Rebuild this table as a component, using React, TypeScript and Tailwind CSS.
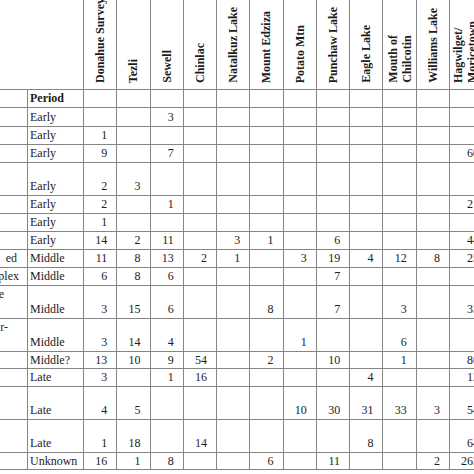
type Row = {
  lead?: string;
  leadPad?: string;
  leadTop?: boolean;
  period: string;
  h: string;
  vals: string[];
  bold?: boolean;
};

const sites: string[][] = [
  ["Donahue Survey"],
  ["Tezli"],
  ["Sewell"],
  ["Chinlac"],
  ["Natalkuz Lake"],
  ["Mount Edziza"],
  ["Potato Mtn"],
  ["Punchaw Lake"],
  ["Eagle Lake"],
  ["Mouth of", "Chilcotin"],
  ["Williams Lake"],
  ["Hagwilget/", "Moricetown"],
];

const e = "";

const rows: Row[] = [
  { period: "Period", bold: true, h: "h-[18px]", vals: [e, e, e, e, e, e, e, e, e, e, e, e] },
  { period: "Early", h: "h-[19px]", vals: [e, e, "3", e, e, e, e, e, e, e, e, e] },
  { period: "Early", h: "h-[18px]", vals: ["1", e, e, e, e, e, e, e, e, e, e, e] },
  { period: "Early", h: "h-[18px]", vals: ["9", e, "7", e, e, e, e, e, e, e, e, "60"] },
  { period: "Early", h: "h-[33px]", vals: ["2", "3", e, e, e, e, e, e, e, e, e, e] },
  { period: "Early", h: "h-[18px]", vals: ["2", e, "1", e, e, e, e, e, e, e, e, "21"] },
  { period: "Early", h: "h-[18px]", vals: ["1", e, e, e, e, e, e, e, e, e, e, e] },
  { period: "Early", h: "h-[18px]", vals: ["14", "2", "11", e, "3", "1", e, "6", e, e, e, "44"] },
  { lead: "ed", leadPad: "pr-[10px]", period: "Middle", h: "h-[18px]", vals: ["11", "8", "13", "2", "1", e, "3", "19", "4", "12", "8", "25"] },
  { lead: "plex", leadPad: "pr-[8px]", period: "Middle", h: "h-[18px]", vals: ["6", "8", "6", e, e, e, e, "7", e, e, e, e] },
  { lead: "e", leadPad: "pr-[23px]", leadTop: true, period: "Middle", h: "h-[33px]", vals: ["3", "15", "6", e, e, "8", e, "7", e, "3", e, "33"] },
  { lead: "r-", leadPad: "pr-[19px]", leadTop: true, period: "Middle", h: "h-[33px]", vals: ["3", "14", "4", e, e, e, "1", e, e, "6", e, e] },
  { period: "Middle?", h: "h-[17px]", vals: ["13", "10", "9", "54", e, "2", e, "10", e, "1", e, "86"] },
  { period: "Late", h: "h-[18px]", vals: ["3", e, "1", "16", e, e, e, e, "4", e, e, "12"] },
  { period: "Late", h: "h-[33px]", vals: ["4", "5", e, e, e, e, "10", "30", "31", "33", "3", "54"] },
  { period: "Late", h: "h-[33px]", vals: ["1", "18", e, "14", e, e, e, e, "8", e, e, "64"] },
  { period: "Unknown", h: "h-[17px]", vals: ["16", "1", "8", e, e, "6", e, "11", e, e, "2", "265"] },
];

const grid = "grid grid-cols-[27px_56px_repeat(11,33.27px)_39px]";

export default function App() {
  return (
    <div className="w-[474px] h-[474px] overflow-hidden bg-white text-[#1c1c1c] text-[12px] leading-[16px] font-['Liberation_Serif','Times_New_Roman',serif]">
      <div className="w-[488px]">
        {/* Header */}
        <div className={`${grid} h-[90px] border-b border-[#858585]`}>
          <div className="col-span-2" />
          {sites.map((s, i) => (
            <div
              key={i}
              className={`border-l border-[#858585] overflow-hidden flex flex-col justify-end items-center pb-[6px] ${
                i === 11 ? "pr-[7px]" : ""
              }`}
            >
              <div className="[writing-mode:vertical-rl] rotate-180 whitespace-nowrap font-bold leading-[14px]">
                {s.map((line, j) => (
                  <span key={j}>
                    {line}
                    {j < s.length - 1 && <br />}
                  </span>
                ))}
              </div>
            </div>
          ))}
        </div>

        {/* Body */}
        {rows.map((r, i) => (
          <div key={i} className={`${grid} ${r.h} border-b border-[#858585]`}>
            <div
              className={`flex justify-end overflow-hidden whitespace-nowrap ${
                r.leadTop ? "items-start" : "items-end pb-[1px]"
              } ${r.leadPad ?? ""}`}
            >
              {r.lead}
            </div>
            <div
              className={`border-l border-[#858585] flex items-end pb-[1px] pl-[2px] ${
                r.bold ? "font-bold" : ""
              }`}
            >
              {r.period}
            </div>
            {r.vals.map((v, j) => (
              <div
                key={j}
                className="border-l border-[#858585] flex items-end justify-end pb-[1px] pr-[9px] whitespace-nowrap"
              >
                {v}
              </div>
            ))}
          </div>
        ))}
      </div>
    </div>
  );
}
